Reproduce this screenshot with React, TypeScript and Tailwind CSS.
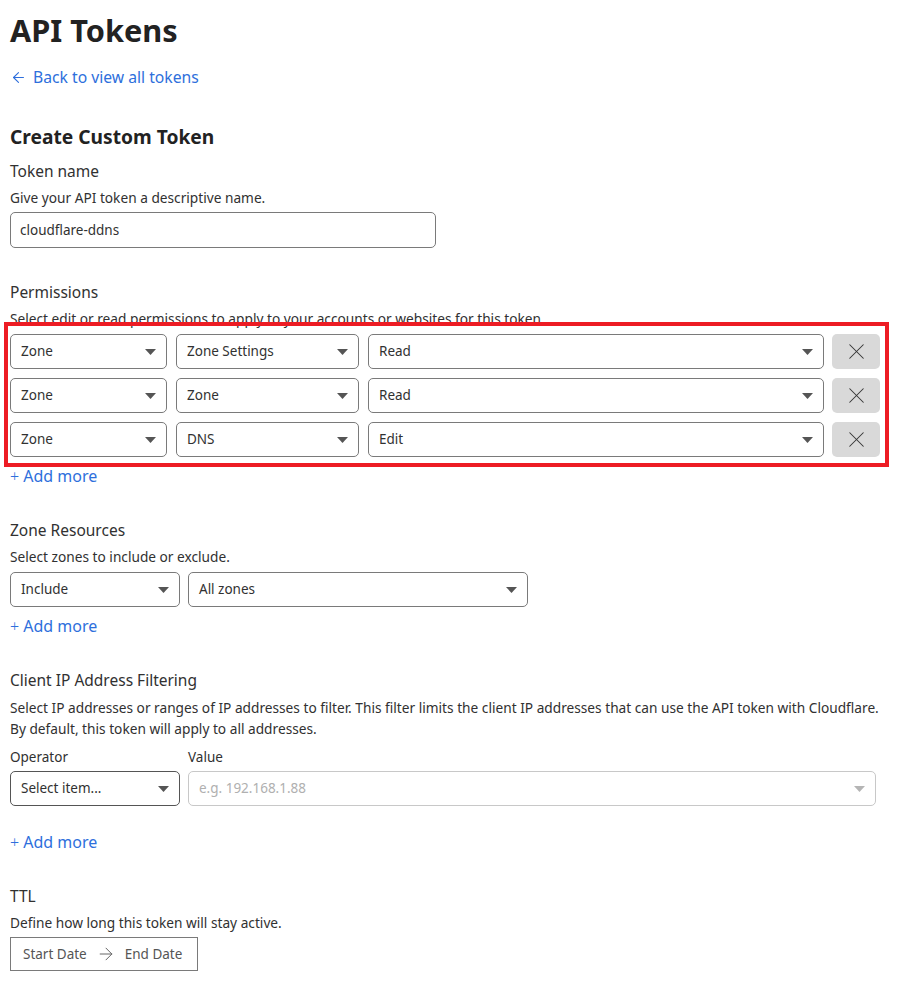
import { X, ArrowLeft, ArrowRight } from 'lucide-react'

const font = { fontFamily: '"Noto Sans", "Noto Sans CJK KR", sans-serif' }

function Caret({ light }: { light?: boolean }) {
  return (
    <svg width="11" height="6" viewBox="0 0 11 6" className="shrink-0">
      <path d="M0 0 L11 0 L5.5 6 Z" fill={light ? '#b5b5b5' : '#555555'} />
    </svg>
  )
}

function Select({
  value,
  className,
  placeholder,
  disabled,
  dark,
}: {
  value: string
  className: string
  placeholder?: boolean
  disabled?: boolean
  dark?: boolean
}) {
  return (
    <div
      className={
        'flex h-[35px] items-center justify-between rounded-[5px] border pl-[10px] pr-[10px] text-[13.5px] ' +
        (disabled ? 'border-[#c8c8c8] ' : dark ? 'border-[#555555] ' : 'border-[#7a7a7a] ') +
        className
      }
    >
      <span className={placeholder ? 'text-[#b0b0b0]' : 'text-[#313131]'}>{value}</span>
      <Caret light={disabled} />
    </div>
  )
}

function AddMore({ className }: { className?: string }) {
  return (
    <div className={'text-[16px] leading-[24px] text-[#2e6fdc] ' + (className || '')}>
      <span className="font-light">+</span> Add more
    </div>
  )
}

const permissions = [
  { a: 'Zone', b: 'Zone Settings', c: 'Read' },
  { a: 'Zone', b: 'Zone', c: 'Read' },
  { a: 'Zone', b: 'DNS', c: 'Edit' },
]

export default function App() {
  return (
    <div className="min-h-screen bg-white px-[10px] pt-[10px] pb-[30px] text-[#313131]" style={font}>
      <h1 className="text-[30.7px] font-bold leading-[40px] text-[#222222]">API Tokens</h1>

      <div className="mt-[17px] flex items-center gap-[6px] text-[15.7px] leading-[20px] text-[#2e6fdc]">
        <ArrowLeft size={17} strokeWidth={1.5} />
        <span>Back to view all tokens</span>
      </div>

      <h2 className="mt-[36px] text-[19.2px] font-bold leading-[28px] text-[#222222]">
        Create Custom Token
      </h2>

      <div className="mt-[8px] text-[15.5px] leading-[24px]">Token name</div>
      <div className="mt-[6px] text-[13.7px] leading-[18px]">Give your API token a descriptive name.</div>
      <div className="mt-[5px] flex h-[36px] w-[426px] items-center rounded-[5px] border border-[#7a7a7a] px-[9px] text-[13.5px]">
        cloudflare-ddns
      </div>

      <div className="mt-[32px] text-[15.5px] leading-[24px]">Permissions</div>
      <div className="mt-[6px] text-[13.7px] leading-[18px]">
        Select edit or read permissions to apply to your accounts or websites for this token.
      </div>
      <div className="relative mt-[6px]">
        <div className="pointer-events-none absolute -top-[12px] -bottom-[10px] left-[-6px] w-[885px] border-[4px] border-[#ed1c24]" />
        <div className="flex flex-col gap-[9px]">
          {permissions.map((p, i) => (
            <div key={i} className="flex items-center">
              <Select value={p.a} className="w-[157px]" />
              <Select value={p.b} className="ml-[9px] w-[183px]" />
              <Select value={p.c} className="ml-[9px] w-[456px]" />
              <div className="ml-[8px] flex h-[35px] w-[48px] items-center justify-center rounded-[5px] bg-[#d9d9d9]">
                <X size={27} strokeWidth={0.9} color="#333333" />
              </div>
            </div>
          ))}
        </div>
      </div>
      <AddMore className="mt-[7px]" />

      <div className="mt-[30px] text-[15.5px] leading-[24px]">Zone Resources</div>
      <div className="mt-[6px] text-[13.7px] leading-[18px]">Select zones to include or exclude.</div>
      <div className="mt-[6px] flex gap-[8px]">
        <Select value="Include" className="w-[170px]" />
        <Select value="All zones" className="w-[340px]" />
      </div>
      <AddMore className="mt-[7px]" />

      <div className="mt-[30px] text-[15.5px] leading-[24px]">Client IP Address Filtering</div>
      <div className="mt-[5px] text-[13.7px] leading-[21px]">
        Select IP addresses or ranges of IP addresses to filter. This filter limits the client IP
        addresses that can use the API token with Cloudflare.
        <br />
        By default, this token will apply to all addresses.
      </div>
      <div className="mt-[8px] flex gap-[8px] text-[13.5px] leading-[20px]">
        <div className="w-[170px]">Operator</div>
        <div>Value</div>
      </div>
      <div className="mt-[4px] flex gap-[8px]">
        <Select value="Select item..." className="w-[170px]" dark />
        <Select value="e.g. 192.168.1.88" className="w-[688px]" placeholder disabled />
      </div>
      <AddMore className="mt-[24px]" />

      <div className="mt-[30px] text-[15.5px] leading-[24px]">TTL</div>
      <div className="mt-[6px] text-[13.7px] leading-[18px]">Define how long this token will stay active.</div>
      <div className="mt-[5px] flex h-[34px] w-[188px] items-center gap-[9px] border border-[#7a7a7a] px-[12px] text-[13.5px] text-[#555555]">
        <span>Start Date</span>
        <ArrowRight size={20} strokeWidth={1.2} color="#666666" />
        <span>End Date</span>
      </div>
    </div>
  )
}
